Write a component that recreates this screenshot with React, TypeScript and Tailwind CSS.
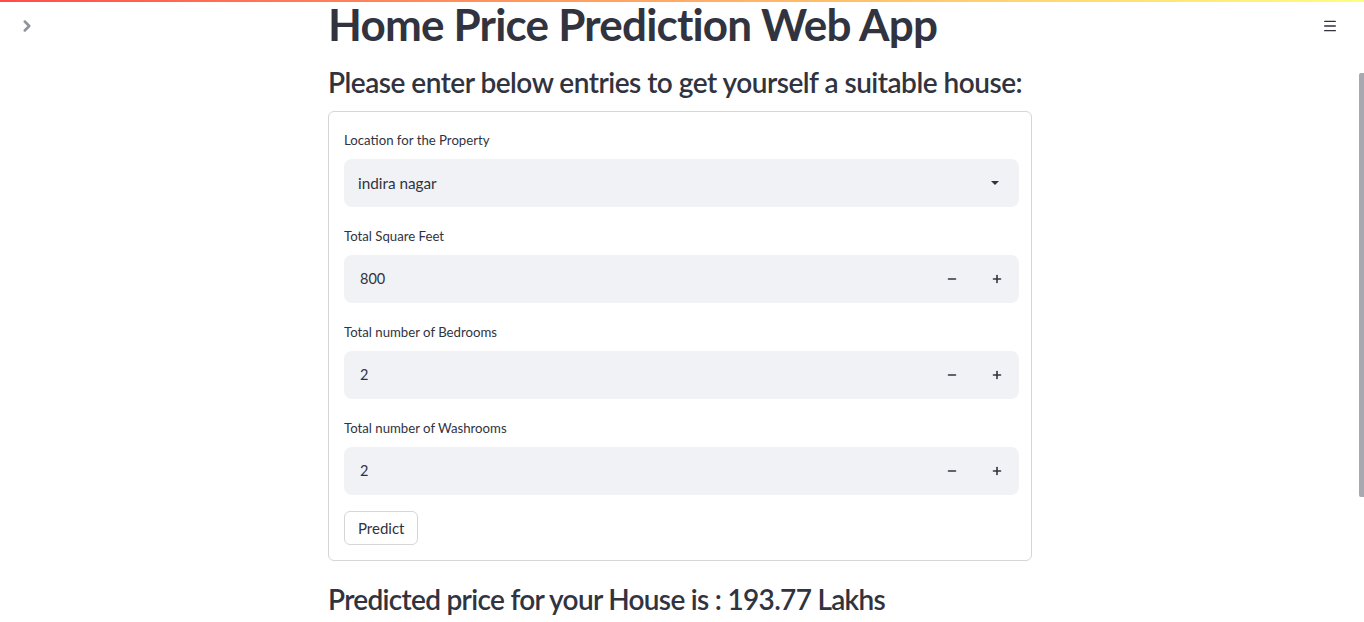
import React, { useState } from 'react';
import { ChevronRight, Menu, Minus, Plus } from 'lucide-react';

// streamlit-like form for predicting home prices

const font = { fontFamily: '"Source Sans Pro", "Lato", "Noto Sans", sans-serif' };

const NumberField = ({ label, value, onChange }: { label: string; value: number; onChange: (v: number) => void }) => (
  <div className="flex flex-col">
    <label className="text-[13.2px] leading-[24px] text-[#31333f] mb-[7px]">{label}</label>
    <div className="flex h-[48px] rounded-[8px] bg-[#f0f2f6] overflow-hidden">
      <div className="flex-1 flex items-center px-[16px] text-[14.5px] text-[#31333f]">{value}</div>
      <button onClick={() => onChange(value - 1)} className="w-[45px] flex items-center justify-center text-[#31333f]">
        <Minus size={12} strokeWidth={3.2} />
      </button>
      <button onClick={() => onChange(value + 1)} className="w-[45px] flex items-center justify-center text-[#31333f]">
        <Plus size={12} strokeWidth={3.2} />
      </button>
    </div>
  </div>
);

const App = () => {
  const [sqft, setSqft] = useState(800);
  const [beds, setBeds] = useState(2);
  const [baths, setBaths] = useState(2);

  return (
    <div className="relative h-[622px] overflow-hidden bg-white text-[#31333f]" style={font}>
      {/* top decoration */}
      <div className="h-[2px] bg-gradient-to-r from-[#ff4b4b] to-[#fffd80]" />

      <div className="absolute left-[18px] top-[17px] text-[#8f939c]">
        <ChevronRight size={18} strokeWidth={3.4} />
      </div>
      <div className="absolute right-[26px] top-[18px] text-[#31333f]">
        <Menu size={16} strokeWidth={2} />
      </div>
      {/* scrollbar */}
      <div className="absolute right-0 top-[73px] w-[5px] h-[424px] bg-[#a8a8b0] rounded-l-[2px]" />

      <div className="w-[704px] mx-auto" style={{ transform: 'translateX(-2px)' }}>
        <h1 className="text-[44px] font-bold leading-[46px] tracking-[-0.8px] mt-[-1px]">Home Price Prediction Web App</h1>
        <h3 className="text-[28px] font-semibold leading-[36px] tracking-[-0.5px] mt-[17px] whitespace-nowrap">
          Please enter below entries to get yourself a suitable house:
        </h3>

        <div className="mt-[11px] border border-[#d6d6d9] rounded-[6px] pl-[15px] pr-[12px] pt-[16px] pb-[15px]">
          <div className="flex flex-col gap-[17px]">
            <div className="flex flex-col">
              <label className="text-[13.2px] leading-[24px] mb-[7px]">Location for the Property</label>
              <div className="flex items-center justify-between h-[48px] rounded-[8px] bg-[#f0f2f6] px-[14px]">
                <span className="text-[15.3px]">indira nagar</span>
                <svg width="10" height="6" viewBox="0 0 10 6" className="mr-[5px]">
                  <path d="M1 1h8L5 5z" fill="#31333f" />
                </svg>
              </div>
            </div>
            <NumberField label="Total Square Feet" value={sqft} onChange={setSqft} />
            <NumberField label="Total number of Bedrooms" value={beds} onChange={setBeds} />
            <NumberField label="Total number of Washrooms" value={baths} onChange={setBaths} />
          </div>
          <button className="mt-[16px] h-[34px] px-[13px] border border-[#d6d6d9] rounded-[6px] text-[15px] bg-white">
            Predict
          </button>
        </div>

        <h3 className="text-[28px] font-semibold leading-[36px] tracking-[-0.7px] mt-[20px] whitespace-nowrap">
          Predicted price for your House is : 193.77 Lakhs
        </h3>
      </div>
    </div>
  );
};

export default App;
